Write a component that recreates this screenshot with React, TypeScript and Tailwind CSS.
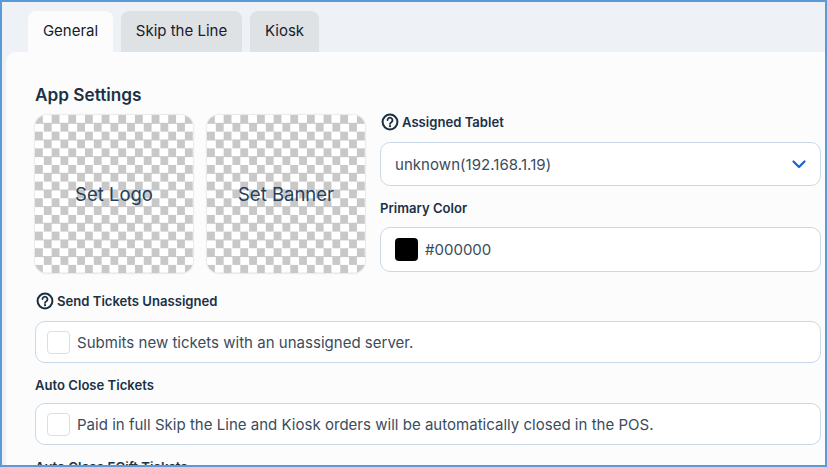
import React from 'react'

const font = { fontFamily: 'Inter, "Liberation Sans", sans-serif' }

function HelpIcon() {
  return (
    <svg width="18" height="18" viewBox="0 0 18 18" fill="none" className="shrink-0">
      <circle cx="9" cy="9" r="7.4" stroke="#1c2f3f" strokeWidth="2" />
      <path d="M6.5 7.1a2.5 2.5 0 1 1 3.9 2.1c-.9.5-1.4.9-1.4 1.7" stroke="#1c2f3f" strokeWidth="1.8" strokeLinecap="round" />
      <circle cx="9" cy="13.2" r="1.1" fill="#1c2f3f" />
    </svg>
  )
}

function Label({ text, help }: { text: string; help?: boolean }) {
  return (
    <div className="flex h-[18px] items-center gap-[3px] text-[13.1px] leading-[18px] font-semibold text-[#1a3146]">
      {help && <HelpIcon />}
      <span>{text}</span>
    </div>
  )
}

function CheckRow({ text }: { text: string }) {
  return (
    <div className="flex h-[42px] items-center rounded-[10px] border border-[#c9d9e8] bg-white pl-[11px]">
      <div className="h-[23px] w-[23px] rounded-[4px] border border-[#d5e0ea] bg-white" />
      <span className="ml-[7px] pt-[2px] text-[15px] tracking-[0.02px] text-[#3a4c5c]">{text}</span>
    </div>
  )
}

function Checker({ label }: { label: string }) {
  return (
    <div className="flex h-[158px] w-[158px] items-center justify-center overflow-hidden rounded-[12px] bg-[conic-gradient(#ffffff_25%,#c8c8c8_25%_50%,#ffffff_50%_75%,#c8c8c8_75%)] bg-[length:16.66px_16.66px] shadow-[0_0_2px_rgba(0,0,0,0.25)]">
      <span className="pt-[2px] text-[18.5px] whitespace-nowrap text-[#24405a]">{label}</span>
    </div>
  )
}

function Tab({ label, active, width }: { label: string; active?: boolean; width: string }) {
  return (
    <div className={`flex h-[41px] items-center justify-center rounded-t-[8px] text-[15px] text-[#15202b] ${width} ${active ? 'bg-[#fcfcfd]' : 'bg-[#dfe2e5]'}`}>
      {label}
    </div>
  )
}

export default function App() {
  return (
    <div style={font} className="h-[467px] w-[827px] overflow-hidden border-2 border-[#5b9bd5] bg-[#eef2f7]">
      <div className="flex gap-[8px] pt-[9px] pl-[26px]">
        <Tab label="General" active width="w-[85px]" />
        <Tab label="Skip the Line" width="w-[121px]" />
        <Tab label="Kiosk" width="w-[69px]" />
      </div>
      <div className="ml-[4px] h-[500px] rounded-tl-[10px] bg-[#fcfcfd] pt-[33px] pr-[4px] pl-[29px]">
        <h2 className="h-[20px] text-[17.2px] leading-[20px] font-semibold text-[#1a3146]">App Settings</h2>
        <div className="mt-[10px] flex">
          <Checker label="Set Logo" />
          <div className="ml-[14px]">
            <Checker label="Set Banner" />
          </div>
          <div className="ml-[15px] flex-1">
            <div className="-mt-[2px] pl-px">
              <Label text="Assigned Tablet" help />
            </div>
            <div className="mt-[11px] flex h-[44px] items-center justify-between rounded-[10px] border border-[#c9d9e8] bg-white pr-[13px] pl-[14px]">
              <span className="pt-[2px] text-[15px] tracking-[0.05px] text-[#3a4c5c]">unknown(192.168.1.19)</span>
              <svg width="16" height="16" viewBox="0 0 16 16" fill="none">
                <path d="M2.5 5.5 8 11l5.5-5.5" stroke="#1d5fd1" strokeWidth="2.2" strokeLinecap="round" strokeLinejoin="round" />
              </svg>
            </div>
            <div className="mt-[13px]">
              <Label text="Primary Color" />
            </div>
            <div className="mt-[10px] flex h-[45px] items-center rounded-[10px] border border-[#c9d9e8] bg-white pl-[14px]">
              <div className="h-[23px] w-[23px] rounded-[4px] bg-black" />
              <span className="ml-[7px] pt-[2px] text-[15px] text-[#3a4c5c]">#000000</span>
            </div>
          </div>
        </div>
        <div className="mt-[19px] pl-px">
          <Label text="Send Tickets Unassigned" help />
        </div>
        <div className="mt-[11px]">
          <CheckRow text="Submits new tickets with an unassigned server." />
        </div>
        <div className="mt-[13px]">
          <Label text="Auto Close Tickets" />
        </div>
        <div className="mt-[9px]">
          <CheckRow text="Paid in full Skip the Line and Kiosk orders will be automatically closed in the POS." />
        </div>
        <div className="mt-[13px]">
          <Label text="Auto Close EGift Tickets" />
        </div>
      </div>
    </div>
  )
}
